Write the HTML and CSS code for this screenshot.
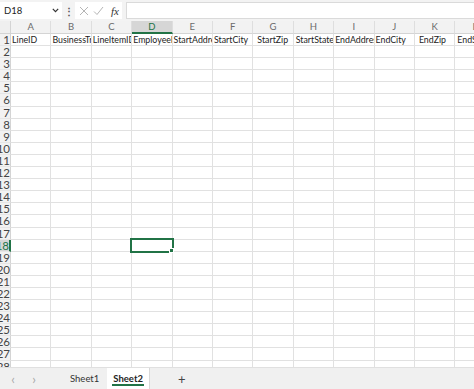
FILE: index.html
```html
<!DOCTYPE html>
<html lang="en">
  <head>
    <meta charset="UTF-8" />
    <meta name="viewport" content="width=device-width, initial-scale=1.0" />
    <title>Sheet2</title>
    <link rel="stylesheet" href="styles.css">
  </head>
  <body>
    <div class="app">
      <!-- Name box and formula bar -->
      <div class="formula-bar">
        <div class="name-box">
          <span>D18</span>
          <svg class="chev" width="7" height="5" viewBox="0 0 7 5"><path d="M0.8 0.8 L3.5 3.6 L6.2 0.8" fill="none" stroke="#333" stroke-width="1.2"/></svg>
        </div>
        <div class="dots">&#8942;</div>
        <div class="fx-buttons">
          <svg width="10" height="10" viewBox="0 0 10 10"><path d="M1 1 L9 9 M9 1 L1 9" stroke="#b5b5b5" stroke-width="1"/></svg>
          <svg width="11" height="10" viewBox="0 0 11 10"><path d="M1 5.5 L4 8.5 L10 1" fill="none" stroke="#b5b5b5" stroke-width="1"/></svg>
          <span class="fx">fx</span>
        </div>
        <div class="formula-input"></div>
      </div>

      <!-- Worksheet grid, filled in by the script below -->
      <div class="sheet" id="sheet"></div>

      <!-- Sheet tabs -->
      <div class="tabs">
        <span class="nav">&lsaquo;</span>
        <span class="nav">&rsaquo;</span>
        <span class="tab">Sheet1</span>
        <span class="tab active">Sheet2</span>
        <span class="add">+</span>
      </div>
    </div>

    <script>
      const cols = ["A", "B", "C", "D", "E", "F", "G", "H", "I", "J", "K", "L"];
      const headers = ["LineID", "BusinessTr", "LineItemID", "EmployeeI", "StartAddre", "StartCity",
        "StartZip", "StartState", "EndAddres", "EndCity", "EndZip", "EndState"];
      const sheet = document.getElementById("sheet");

      function cell(cls, text) {
        const div = document.createElement("div");
        div.className = cls;
        div.textContent = text || "";
        sheet.appendChild(div);
        return div;
      }

      // column header row
      cell("corner");
      cols.forEach(function (c) {
        cell(c === "D" ? "col-head selected" : "col-head", c);
      });

      // rows
      for (let r = 1; r <= 28; r++) {
        const head = cell(r === 18 ? "row-head selected" : "row-head");
        const num = document.createElement("span");
        num.textContent = String(r);
        head.appendChild(num);
        cols.forEach(function (c, i) {
          let cls = "cell";
          if (r === 1 && (i === 6 || i === 10)) cls += " indent";
          if (r === 1 && (i === 7 || i === 11)) cls += " indent-sm";
          if (r === 18 && c === "D") cls += " active";
          cell(cls, r === 1 ? headers[i] : "");
        });
      }
    </script>
  </body>
</html>
```

FILE: styles.css
```css
body {
  margin: 0;
  font-family: Lato, "Open Sans", sans-serif;
  background: #fff;
  overflow: hidden;
}
.app {
  width: 474px;
  height: 389px;
  display: flex;
  flex-direction: column;
  overflow: hidden;
}
.formula-bar {
  height: 21px;
  flex: none;
  display: flex;
  align-items: center;
  background: #f3f3f3;
  box-sizing: border-box;
  padding: 2px 0 2px 0;
}
.name-box {
  width: 62px;
  height: 17px;
  box-sizing: border-box;
  background: #fff;
  display: flex;
  align-items: center;
  justify-content: space-between;
  padding: 0 3px 0 4px;
  font-size: 9.5px;
  color: #222;
}
.dots {
  width: 13px;
  text-align: center;
  font-size: 10px;
  color: #555;
  font-weight: bold;
}
.fx-buttons {
  height: 17px;
  width: 47px;
  background: #fff;
  display: flex;
  align-items: center;
  gap: 4px;
  padding-left: 4px;
  box-sizing: border-box;
}
.fx {
  font-family: "Liberation Serif", serif;
  font-style: italic;
  font-size: 11px;
  color: #333;
  margin-left: 3px;
}
.formula-input {
  flex: 1;
  height: 17px;
  margin-left: 4px;
  background: #fff;
  border: 1px solid #dadada;
  border-right: none;
  box-sizing: border-box;
}
.sheet {
  flex: 1;
  display: grid;
  grid-template-columns: 11px repeat(12, 40.4px);
  grid-template-rows: 13px repeat(28, 12.1px);
  overflow: hidden;
  font-size: 8.8px;
  color: #222;
}
.corner {
  background: #efefef;
  border-right: 1px solid #d4d4d4;
  border-bottom: 1px solid #d4d4d4;
}
.col-head {
  background: #f2f2f2;
  color: #6b6b6b;
  font-size: 9.5px;
  text-align: center;
  line-height: 12px;
  border-right: 1px solid #dedede;
  border-bottom: 1px solid #d4d4d4;
  box-sizing: border-box;
}
.col-head.selected {
  background: #d6d6d6;
  color: #217346;
  border-bottom: 2px solid #217346;
}
.row-head {
  background: #f2f2f2;
  color: #444;
  font-size: 11.5px;
  line-height: 12px;
  border-right: 1px solid #d4d4d4;
  border-bottom: 1px solid #e6e6e6;
  box-sizing: border-box;
  overflow: hidden;
  white-space: nowrap;
  display: flex;
  justify-content: flex-end;
  padding-right: 0;
}
.row-head span {
  flex: none;
}
.row-head.selected {
  background: #d6d6d6;
  color: #217346;
  border-right: 2px solid #217346;
}
.cell {
  border-right: 1px solid #e1e1e1;
  border-bottom: 1px solid #e1e1e1;
  box-sizing: border-box;
  line-height: 11px;
  padding-left: 1px;
  white-space: nowrap;
  overflow: hidden;
}
.cell.indent {
  padding-left: 4px;
}
.cell.indent-sm {
  padding-left: 2px;
}
.cell.active {
  position: relative;
  overflow: visible;
}
.cell.active::before {
  content: "";
  position: absolute;
  left: -1px;
  top: -1px;
  right: -1px;
  bottom: -1px;
  border: 1px solid #217346;
  outline: 0.5px solid #217346;
}
.cell.active::after {
  content: "";
  position: absolute;
  right: -2px;
  bottom: -2px;
  width: 3px;
  height: 3px;
  background: #217346;
  border: 1px solid #fff;
}
.tabs {
  height: 22px;
  flex: none;
  background: #f0f0f0;
  border-top: 1px solid #e0e0e0;
  box-sizing: border-box;
  display: flex;
  align-items: center;
  font-size: 9.5px;
  color: #333;
}
.nav {
  font-size: 13px;
  color: #a8a8a8;
  width: 10px;
  text-align: center;
  margin-left: 8px;
  margin-right: 3px;
}
.tab {
  height: 21px;
  line-height: 21px;
  padding: 0 6px;
  margin-left: 22px;
  margin-top: -1px;
  box-sizing: border-box;
}
.tab.active {
  margin-left: 2px;
  background: #fff;
  font-weight: bold;
  color: #1e1e1e;
  position: relative;
  border-right: 1px solid #d8d8d8;
}
.tab.active::after {
  content: "";
  position: absolute;
  left: 5px;
  right: 5px;
  bottom: 3px;
  height: 2px;
  background: #217346;
}
.add {
  margin-left: 28px;
  font-size: 13px;
  color: #444;
}
```
